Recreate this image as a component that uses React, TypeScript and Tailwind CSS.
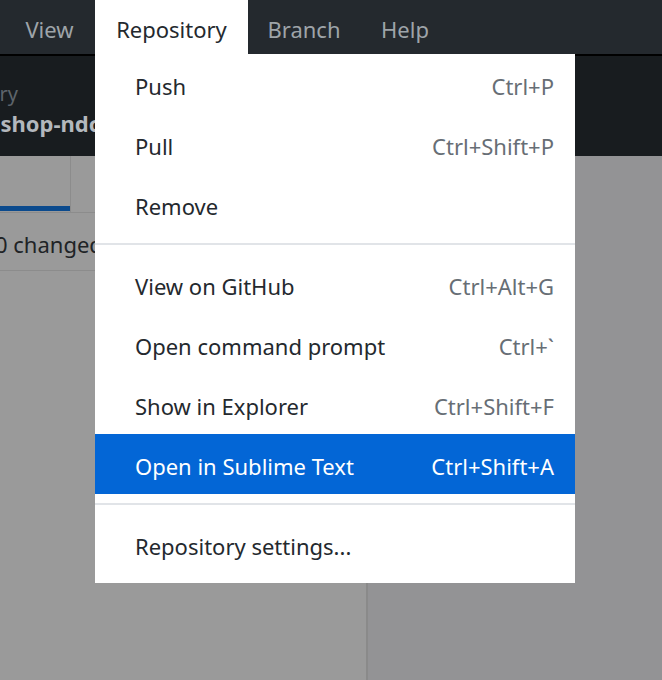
import React from 'react'

const font = { fontFamily: '"Noto Sans", "Open Sans", sans-serif' }

type Item = { label: string; shortcut?: string; active?: boolean }

const groups: Item[][] = [
  [
    { label: 'Push', shortcut: 'Ctrl+P' },
    { label: 'Pull', shortcut: 'Ctrl+Shift+P' },
    { label: 'Remove' },
  ],
  [
    { label: 'View on GitHub', shortcut: 'Ctrl+Alt+G' },
    { label: 'Open command prompt', shortcut: 'Ctrl+`' },
    { label: 'Show in Explorer', shortcut: 'Ctrl+Shift+F' },
    { label: 'Open in Sublime Text', shortcut: 'Ctrl+Shift+A', active: true },
  ],
  [{ label: 'Repository settings...' }],
]

export default function App() {
  return (
    <div className="relative w-[662px] h-[680px] overflow-hidden bg-[#939395]" style={font}>
      {/* Menu bar */}
      <div className="flex h-[54px] bg-[#24292e] pl-1 text-[22px]">
        <div className="flex w-[91px] items-center justify-center pt-1 text-[#9ea4a9]">View</div>
        <div className="flex w-[153px] items-center justify-center pt-1 bg-white text-[#24292e]">Repository</div>
        <div className="flex w-[112px] items-center justify-center pt-1 text-[#9ea4a9]">Branch</div>
        <div className="flex w-[90px] items-center justify-center pt-1 text-[#9ea4a9]">Help</div>
      </div>
      <div className="h-[2px] bg-black" />

      {/* Toolbar (dimmed) */}
      <div className="h-[100px] bg-[#181c1f] overflow-hidden pt-[24px] whitespace-nowrap">
        <div className="flex w-[18px] justify-end text-[20px] leading-[28px] text-[#5d646b]">
          <span>Current repository</span>
        </div>
        <div className="flex w-[100px] justify-end text-[22px] leading-[30px] font-bold text-[#b3b8bd]">
          <span>webshop-ndc</span>
        </div>
      </div>

      {/* Panes */}
      <div className="flex h-[524px]">
        <div className="w-[366px] bg-[#9a9a9a] overflow-hidden">
          <div className="flex h-[57px] border-b border-[#8c8c8c]">
            <div className="w-[71px] border-r border-[#8c8c8c] flex flex-col justify-end">
              <div className="h-[5px] bg-[#0b4a8d] mb-[1px]" />
            </div>
          </div>
          <div className="h-[58px] border-b border-[#8c8c8c] flex items-center pt-[5px] ml-[-5px] text-[22px] text-[#202326] whitespace-nowrap">
            0 changed files
          </div>
        </div>
        <div className="w-[2px] bg-[#8a8a8a]" />
        <div className="flex-1 bg-[#939395]" />
      </div>

      {/* Repository menu */}
      <div className="absolute left-[95px] top-[54px] w-[480px] bg-white pb-[9px] text-[22px]">
        {groups.map((group, gi) => (
          <div key={gi}>
            {gi > 0 && (
              <div className="py-[9px]">
                <div className="h-[2px] bg-[#e1e4e8]" />
              </div>
            )}
            {group.map((item) => (
              <div
                key={item.label}
                className={`flex h-[60px] items-center justify-between pt-[5px] pl-10 pr-[21px] ${
                  item.active ? 'bg-[#0366d6] text-white' : 'text-[#24292e]'
                }`}
              >
                <span>{item.label}</span>
                {item.shortcut && (
                  <span className={item.active ? 'text-white' : 'text-[#676e75]'}>{item.shortcut}</span>
                )}
              </div>
            ))}
          </div>
        ))}
      </div>
    </div>
  )
}
